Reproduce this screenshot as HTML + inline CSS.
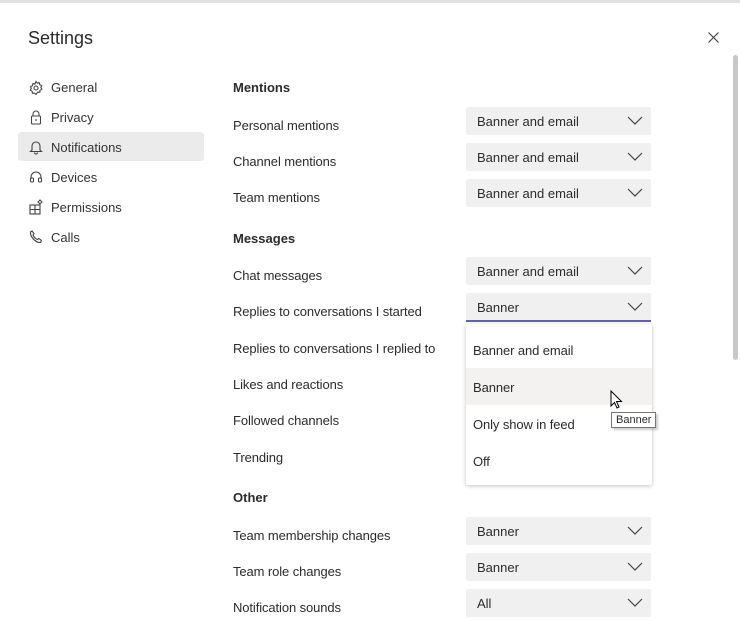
<html><head><style>
body{margin:0;width:740px;height:622px;background:#fff;font-family:"Liberation Sans",sans-serif;color:#2b2b2b;position:relative;overflow:hidden}
.a{position:absolute}
.top{left:0;top:0;width:740px;height:3px;background:#e1e1e1}
.t{font-size:13px;white-space:nowrap;letter-spacing:-0.1px}
.dd{position:absolute;left:466px;width:185px;height:28px;background:#f0f0f0;border-radius:2px;font-size:13px}
.dd span{position:absolute;left:11px;top:7px}
.dd svg{position:absolute;right:8px;top:9px}
.nav{position:absolute;left:51px;font-size:13px;color:#333}
.ic{position:absolute;left:28px}
.h{font-weight:bold;font-size:13px}
</style></head><body>
<div class="a top"></div>
<div class="a" style="left:28px;top:28px;font-size:18px;">Settings</div>
<svg class="a" style="left:708px;top:32px" width="11" height="11"><path d="M0.5 0.5l10 10M10.5 0.5l-10 10" stroke="#444" stroke-width="1.2"/></svg>
<div class="a" style="left:733px;top:55px;width:5px;height:305px;background:#c8c8c8;border-radius:3px"></div>
<div class="a" style="left:18px;top:132px;width:186px;height:29px;background:#ebebeb;border-radius:3px"></div>
<svg class="ic" style="top:80px" width="16" height="16" viewBox="0 0 16 16" fill="none" stroke="#444" stroke-width="1.1"><path d="M8 1.5l1.3 1.6 2-.4.5 2 1.9.8-.8 1.9 1 1.8-1.8 1-.3 2-2-.1L8 14.5l-1.6-1.4-2 .1-.3-2-1.8-1 1-1.8-.8-1.9 1.9-.8.5-2 2 .4z"/><circle cx="8" cy="8" r="2"/></svg>
<div class="nav" style="top:80px">General</div>
<svg class="ic" style="top:109px" width="16" height="16" viewBox="0 0 16 16" fill="none" stroke="#444" stroke-width="1.1"><path d="M5 7V5a3 3 0 016 0v2"/><rect x="3.5" y="7" width="9" height="8" rx="1"/><path d="M8 10v2"/></svg>
<div class="nav" style="top:110px">Privacy</div>
<svg class="ic" style="top:139px" width="16" height="16" viewBox="0 0 16 16" fill="none" stroke="#444" stroke-width="1.1"><path d="M4 11V7a4 4 0 018 0v4l1.5 1.5h-11z"/><path d="M6.5 13.5a1.5 1.5 0 003 0"/></svg>
<div class="nav" style="top:140px">Notifications</div>
<svg class="ic" style="top:169px" width="16" height="16" viewBox="0 0 16 16" fill="none" stroke="#444" stroke-width="1.1"><path d="M3 10V8a5 5 0 0110 0v2"/><rect x="2.5" y="9" width="3" height="4" rx="1"/><rect x="10.5" y="9" width="3" height="4" rx="1"/></svg>
<div class="nav" style="top:170px">Devices</div>
<svg class="ic" style="top:199px" width="16" height="16" viewBox="0 0 16 16" fill="none" stroke="#444" stroke-width="1.1"><rect x="2" y="6" width="10" height="9"/><path d="M7 6v9M2 10.5h10"/><path d="M10 3l2-2 2 2-2 2z"/></svg>
<div class="nav" style="top:200px">Permissions</div>
<svg class="ic" style="top:229px" width="16" height="16" viewBox="0 0 16 16" fill="none" stroke="#444" stroke-width="1.1"><path d="M4 2l2 2.5-1 1.5c.8 2 2.5 3.7 4.5 4.5l1.5-1 2.5 2-1 2C8 14 2 8 2.5 3z"/></svg>
<div class="nav" style="top:230px">Calls</div>

<div class="a h" style="left:233px;top:80px">Mentions</div>
<div class="a t" style="left:233px;top:118px">Personal mentions</div>
<div class="a t" style="left:233px;top:154px">Channel mentions</div>
<div class="a t" style="left:233px;top:190px">Team mentions</div>
<div class="a h" style="left:233px;top:231px">Messages</div>
<div class="a t" style="left:233px;top:268px">Chat messages</div>
<div class="a t" style="left:233px;top:304px">Replies to conversations I started</div>
<div class="a t" style="left:233px;top:341px">Replies to conversations I replied to</div>
<div class="a t" style="left:233px;top:377px">Likes and reactions</div>
<div class="a t" style="left:233px;top:413px">Followed channels</div>
<div class="a t" style="left:233px;top:450px">Trending</div>
<div class="a h" style="left:233px;top:490px">Other</div>
<div class="a t" style="left:233px;top:528px">Team membership changes</div>
<div class="a t" style="left:233px;top:564px">Team role changes</div>
<div class="a t" style="left:233px;top:600px">Notification sounds</div>

<div class="dd" style="top:107px"><span>Banner and email</span><svg width="16" height="10"><path d="M1 1l7 7 7-7" fill="none" stroke="#444" stroke-width="1.2"/></svg></div>
<div class="dd" style="top:143px"><span>Banner and email</span><svg width="16" height="10"><path d="M1 1l7 7 7-7" fill="none" stroke="#444" stroke-width="1.2"/></svg></div>
<div class="dd" style="top:179px"><span>Banner and email</span><svg width="16" height="10"><path d="M1 1l7 7 7-7" fill="none" stroke="#444" stroke-width="1.2"/></svg></div>
<div class="dd" style="top:257px"><span>Banner and email</span><svg width="16" height="10"><path d="M1 1l7 7 7-7" fill="none" stroke="#444" stroke-width="1.2"/></svg></div>
<div class="dd" style="top:293px;border-bottom:2px solid #6264a7;height:27px;border-radius:2px 2px 0 0"><span>Banner</span><svg width="16" height="10"><path d="M1 1l7 7 7-7" fill="none" stroke="#444" stroke-width="1.2"/></svg></div>
<div class="dd" style="top:517px"><span>Banner</span><svg width="16" height="10"><path d="M1 1l7 7 7-7" fill="none" stroke="#444" stroke-width="1.2"/></svg></div>
<div class="dd" style="top:553px"><span>Banner</span><svg width="16" height="10"><path d="M1 1l7 7 7-7" fill="none" stroke="#444" stroke-width="1.2"/></svg></div>
<div class="dd" style="top:589px"><span>All</span><svg width="16" height="10"><path d="M1 1l7 7 7-7" fill="none" stroke="#444" stroke-width="1.2"/></svg></div>

<div class="a" style="left:466px;top:324px;width:186px;height:161px;background:#fff;box-shadow:0 1px 4px rgba(0,0,0,.25);border-radius:2px">
<div class="a" style="left:0;top:44px;width:186px;height:37px;background:#f3f2f1"></div>
<div class="a t" style="left:7px;top:19px">Banner and email</div>
<div class="a t" style="left:7px;top:56px">Banner</div>
<div class="a t" style="left:7px;top:93px">Only show in feed</div>
<div class="a t" style="left:7px;top:130px">Off</div>
</div>
<svg class="a" style="left:610px;top:390px" width="14" height="20" viewBox="0 0 14 20"><path d="M1 1v15l3.5-3.5 2.5 5.5 2-1-2.5-5.5h5z" fill="#fff" stroke="#000" stroke-width="1"/></svg>
<div class="a" style="left:611px;top:412px;border:1px solid #767676;background:#fff;font-size:11px;padding:1px 4px;box-shadow:2px 2px 2px rgba(0,0,0,.2)">Banner</div>
</body></html>
